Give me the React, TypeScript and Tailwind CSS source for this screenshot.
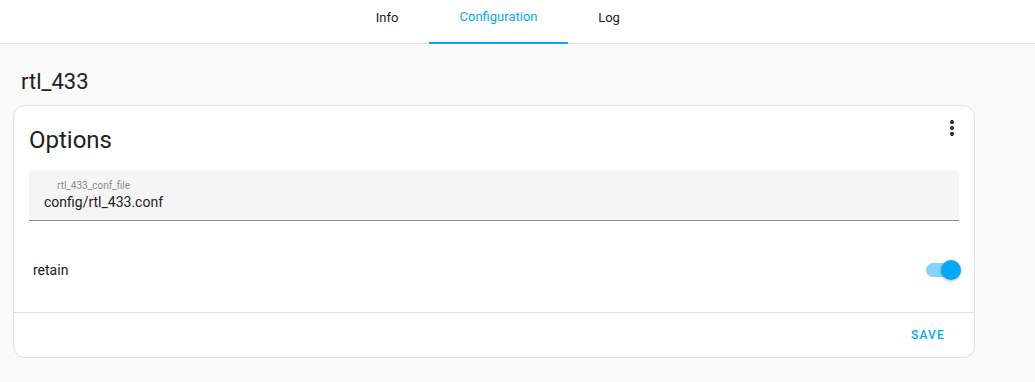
import React from "react";

export default function App() {
  return (
    <div className="w-[1035px] h-[382px] bg-[#fafafa] overflow-hidden" style={{ fontFamily: "Roboto, 'Liberation Sans', sans-serif" }}>
      <div className="h-[44px] bg-white border-b border-[#e0e0e0] flex justify-center pr-[40px]">
        <div className="flex h-full text-[13px]">
          <div className="w-[84px] flex justify-center items-center text-[#212121] h-full pb-[7px]">Info</div>
          <div className="relative w-[139px] flex justify-center items-center text-[#03a9f4] h-full pb-[9px]">
            Configuration
            <div className="absolute left-0 right-0 bottom-[-1px] h-[2px] bg-[#03a9f4]" />
          </div>
          <div className="w-[82px] flex justify-center items-center text-[#212121] h-full pb-[7px]">Log</div>
        </div>
      </div>
      <div className="pl-[13px] w-[975px]">
        <div className="pl-[8px] pt-[24px] h-[61px] text-[22px] text-[#212121] leading-[28px]">rtl_433</div>
        <div className="bg-white border border-[#e0e0e0] rounded-[12px] h-[253px] flex flex-col">
          <div className="relative px-[15px] pt-[18px]">
            <div className="text-[24px] leading-[32px] text-[#212121]">Options</div>
            <div className="absolute right-[10px] top-[10px] w-[24px] h-[24px] flex items-center justify-center">
              <svg width="24" height="24" viewBox="0 0 24 24">
                <path fill="#212121" d="M12,16A2,2 0 0,1 14,18A2,2 0 0,1 12,20A2,2 0 0,1 10,18A2,2 0 0,1 12,16M12,10A2,2 0 0,1 14,12A2,2 0 0,1 12,14A2,2 0 0,1 10,12A2,2 0 0,1 12,10M12,4A2,2 0 0,1 14,6A2,2 0 0,1 12,8A2,2 0 0,1 10,6A2,2 0 0,1 12,4Z" />
              </svg>
            </div>
            <div className="mt-[14px] h-[51px] bg-[#f5f5f5] rounded-t-[4px] border-b border-[#8a8a8a] flex flex-col">
              <div className="pl-[28px] pt-[10px] text-[10px] leading-[12px] text-[#8a8a8a]">rtl_433_conf_file</div>
              <div className="pl-[15px] pt-[1px] text-[14px] leading-[18px] text-[#212121]">config/rtl_433.conf</div>
            </div>
            <div className="flex items-center justify-between h-[60px] mt-[19px] pl-[4px]">
              <span className="text-[14px] text-[#212121]">retain</span>
              <div className="relative w-[36px] h-[20px] mr-[-1px]">
                <div className="absolute left-[2px] top-[3px] w-[30px] h-[14px] rounded-full bg-[#81d4fa]" />
                <div className="absolute right-[-1px] top-0 w-[20px] h-[20px] rounded-full bg-[#03a9f4] shadow-[0_1px_3px_rgba(0,0,0,0.3)]" />
              </div>
            </div>
          </div>
          <div className="mt-[12px] border-t border-[#e0e0e0] flex-1 flex items-center justify-end pr-[29px] pb-[1px]">
            <span className="text-[12px] font-medium tracking-[0.1em] text-[#03a9f4]">SAVE</span>
          </div>
        </div>
      </div>
    </div>
  );
}
